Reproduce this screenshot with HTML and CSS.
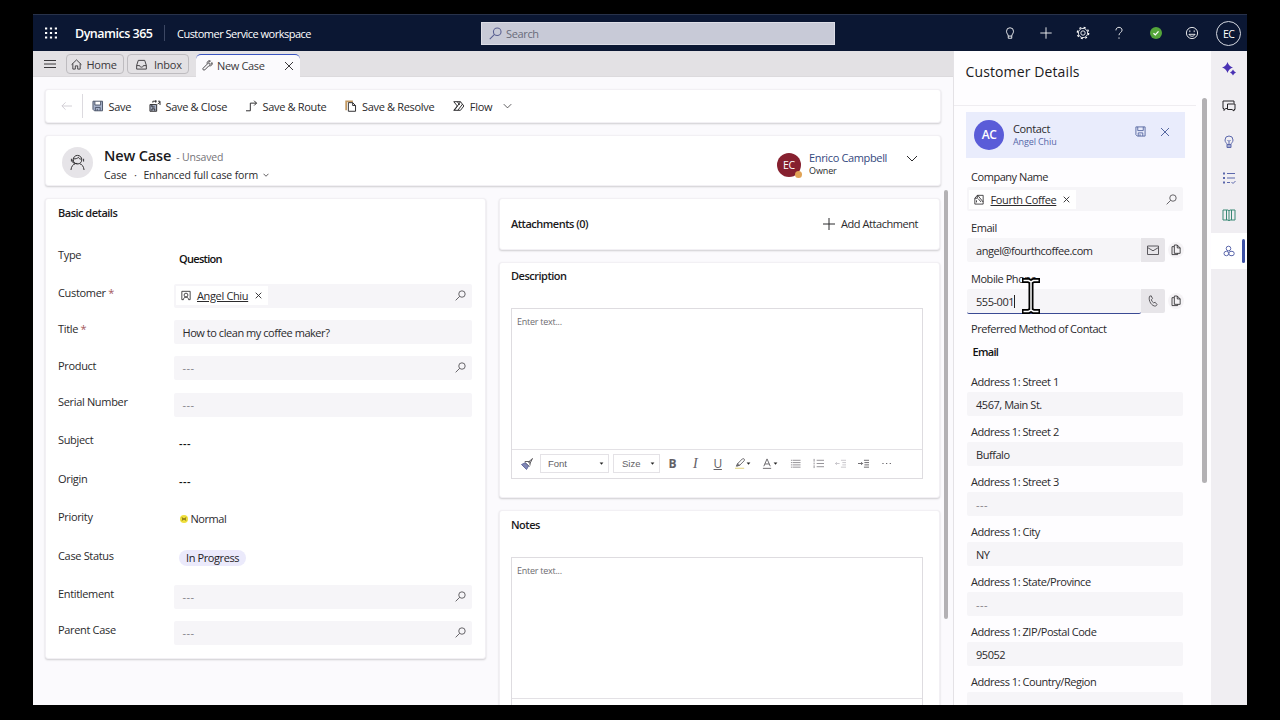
FILE: index.html
```html
<!DOCTYPE html>
<html lang="en">
<head>
    <meta charset="UTF-8">
    <meta name="viewport" content="width=device-width, initial-scale=1.0">
    <title>New Case - Customer Service workspace</title>
    <link rel="stylesheet" href="styles.css">
</head>
<body>
    <!-- Shared icons -->
    <svg class="sprite" width="0" height="0">
        <symbol id="i-search" viewBox="0 0 12 12"><circle cx="7.6" cy="4.4" r="3.5"/><path d="M5.1 6.9L.7 11.3"/></symbol>
        <symbol id="i-close" viewBox="0 0 10 10"><path d="M1 1l8 8M9 1L1 9"/></symbol>
        <symbol id="i-chevron" viewBox="0 0 12 7"><path d="M1 1l5 5 5-5"/></symbol>
        <symbol id="i-copy" viewBox="0 0 12 14"><path d="M4 3V1h3.500L11 4.500V11H4V3M7.500 1v3.500H11M4 3H1.200v9.500H8V11"/></symbol>
        <symbol id="i-save" viewBox="0 0 12 12"><path d="M1 1h10v10H2.500L1 9.500zM3 1v4h6V1M3.500 11V7.500h5V11M5.500 9v2"/></symbol>
        <symbol id="i-caret" viewBox="0 0 6 4"><path class="solid" d="M.5.5h5L3 3.500z"/></symbol>
    </svg>

    <div class="app">
        <header>
            <svg class="waffle" viewBox="0 0 12 12"><path d="M0 1.500h12M0 6h12M0 10.500h12"/></svg>
            <span class="brand">Dynamics 365</span>
            <span class="brand-divider"></span>
            <span class="app-name">Customer Service workspace</span>
            <div class="search-box">
                <svg class="icon"><use href="#i-search"/></svg>
                <span>Search</span>
            </div>
            <div class="header-icons">
                <span><svg viewBox="0 0 16 16"><path d="M6 11.500C6 9.500 4 8.800 4 6a4 4 0 0 1 8 0c0 2.800-2 3.500-2 5.500zM6 11.500V14h4v-2.500"/></svg></span>
                <span><svg viewBox="0 0 16 16"><path d="M8 1.500v13M1.500 8h13"/></svg></span>
                <span><svg viewBox="0 0 16 16"><circle cx="8" cy="8" r="5.300"/><circle cx="8" cy="8" r="2.500"/><circle class="teeth" cx="8" cy="8" r="6.500"/></svg></span>
                <span><svg viewBox="0 0 16 16"><path d="M4.500 5c0-2.200 1.500-3.500 3.500-3.500S11.500 3 11.500 4.700C11.500 7.500 8 7.500 8 10.500M8 13v1.600"/></svg></span>
                <span><svg class="status" viewBox="0 0 12 12"><circle cx="6" cy="6" r="6"/><path d="M3.500 6.200l1.800 1.700 3.200-3.500"/></svg></span>
                <span><svg viewBox="0 0 16 16"><circle cx="8" cy="8" r="6.400"/><path d="M4.500 9.500c1.500 3 5.500 3 7 0zM5.500 5v2M10.500 5v2"/></svg></span>
                <span><b class="me">EC</b></span>
            </div>
        </header>

        <div class="body">
            <div class="workspace">
                <nav class="tabs">
                    <svg class="burger" viewBox="0 0 12 8"><path d="M0 .5h12M0 4h12M0 7.500h12"/></svg>
                    <div class="tab tab-home">
                        <svg class="icon" viewBox="0 0 12 12"><path d="M.6 6.200L6 1l5.400 5.200M2 5v6h2.700V7.500h2.600V11H10V5"/></svg>
                        <span>Home</span>
                    </div>
                    <div class="tab tab-inbox">
                        <svg class="icon" viewBox="0 0 12 12"><path d="M2.500 1.500h7L11.300 7v4H.7V7zM.7 7.200H4c0 2.200 4 2.200 4 0h3.300"/></svg>
                        <span>Inbox</span>
                    </div>
                    <div class="tab tab-active">
                        <svg class="icon" viewBox="0 0 12 12"><path d="M11 2.800L9.200 4.500 7.600 4.300 7.400 2.800 9.200 1C7 .2 5 2 5.700 4.500L1.200 9c-1 1 .7 2.800 1.800 1.800l4.500-4.500C10 7 11.800 5 11 2.800z"/></svg>
                        <span>New Case</span>
                        <svg class="tab-close"><use href="#i-close"/></svg>
                    </div>
                </nav>

                <main>
                    <div class="card commands">
                        <svg class="back" viewBox="0 0 12 10"><path d="M12 5H1M5 1L1 5l4 4"/></svg>
                        <button><svg class="icon floppy"><use href="#i-save"/></svg>Save</button>
                        <button class="cmd-close"><svg class="icon" viewBox="0 0 12 12"><path class="fill-floppy" d="M1 5h7v6H1z"/><path d="M1 4.500h7v7H1zM3 4.500v2.500h3M3 11V9h3v2M4 2.500V1M4 1h4M7 0v2.500M9 4l2.500-2M9.500 1h2v4"/></svg>Save &amp; Close</button>
                        <button class="cmd-route"><svg class="icon" viewBox="0 0 12 12"><path d="M0 11h4.500V3H11M8.500.5L11 3 8.500 5.500"/></svg>Save &amp; Route</button>
                        <button class="cmd-resolve"><svg class="icon" viewBox="0 0 12 12"><path class="tan" d="M1.200 10.500V1.200h7"/><path d="M3.500 2.500h4.500l3 3v6H3.500zM8 2.500v3h3"/></svg>Save &amp; Resolve</button>
                        <button class="cmd-flow"><svg class="icon" viewBox="0 0 12 12"><path d="M.8 1.500h7L11.300 6 7.800 10.500h-7L4.500 6zM4.500 1.500L7 4.800M7.800 1.500L1.500 10.500M10 4L5 10.500"/></svg>Flow</button>
                        <svg class="chevron"><use href="#i-chevron"/></svg>
                    </div>

                    <div class="card record">
                        <div class="record-icon"><svg viewBox="0 0 16 18"><circle cx="8" cy="6" r="4.600"/><path d="M1 17c.4-4 2.500-6.300 4.500-6.500M15 17c-.4-4-2.500-6.300-4.500-6.500M3.500 5C6 5.500 8 4.500 9 3.500c.5 1.500 2 2 3.500 2M3 6v3l2.500 1H8M1.500 5v3M14.500 5v3"/></svg></div>
                        <div class="record-text">
                            <div><h1>New Case</h1><span class="unsaved">- Unsaved</span></div>
                            <div class="record-sub"><span>Case</span><i>·</i><span>Enhanced full case form</span><svg class="chevron-sm"><use href="#i-chevron"/></svg></div>
                        </div>
                        <div class="owner">
                            <div class="owner-avatar">EC</div>
                            <div class="owner-text"><b>Enrico Campbell</b><span>Owner</span></div>
                            <svg class="chevron-lg"><use href="#i-chevron"/></svg>
                        </div>
                    </div>

                    <div class="form">
                        <section class="card basic">
                            <h2>Basic details</h2>
                            <div class="fields">
                                <label class="raised">Type</label>
                                <div class="value strong">Question</div>

                                <label>Customer <em>*</em></label>
                                <div class="field">
                                    <span class="pill">
                                        <svg class="icon" viewBox="0 0 12 12"><path d="M3 11H1V1h10v10H9M2.800 11c.3-2 1.500-3 3.200-3s2.900 1 3.200 3"/><circle cx="6" cy="5.500" r="2.300"/></svg>
                                        <u>Angel Chiu</u>
                                        <svg class="pill-close"><use href="#i-close"/></svg>
                                    </span>
                                    <svg class="lookup"><use href="#i-search"/></svg>
                                </div>

                                <label>Title <em>*</em></label>
                                <div class="field title">How to clean my coffee maker?</div>

                                <label class="lowered">Product</label>
                                <div class="field empty">---<svg class="lookup"><use href="#i-search"/></svg></div>

                                <label>Serial Number</label>
                                <div class="field empty">---</div>

                                <label class="raised">Subject</label>
                                <div class="value strong dashes">---</div>

                                <label>Origin</label>
                                <div class="value strong dashes">---</div>

                                <label class="lowered">Priority</label>
                                <div class="value"><svg class="priority" viewBox="0 0 8 8"><circle cx="4" cy="4" r="4"/><path d="M2.200 2.500l1 1.500-1 1.500M5.800 2.500l-1 1.500 1 1.500M3.200 4h1.600"/></svg>Normal</div>

                                <label class="lowered">Case Status</label>
                                <div class="value"><span class="badge">In Progress</span></div>

                                <label>Entitlement</label>
                                <div class="field empty">---<svg class="lookup"><use href="#i-search"/></svg></div>

                                <label>Parent Case</label>
                                <div class="field empty">---<svg class="lookup"><use href="#i-search"/></svg></div>
                            </div>
                        </section>

                        <div class="form-right">
                            <section class="card attachments">
                                <h2>Attachments (0)</h2>
                                <button><svg class="icon" viewBox="0 0 12 12"><path d="M6 0v12M0 6h12"/></svg>Add Attachment</button>
                            </section>

                            <section class="card description">
                                <h2>Description</h2>
                                <div class="editor">
                                    <div class="editor-text">Enter text...</div>
                                    <div class="toolbar">
                                        <svg class="brush" viewBox="0 0 12 12"><path d="M11.500.5L7.500 4 9 5.500zM3.500 4l5 4.500M4 3.500h5v4"/><path class="brush-head" d="M.5 6.500L4 5l3.500 3-2 3.500z"/></svg>
                                        <span class="select select-font">Font<svg class="caret"><use href="#i-caret"/></svg></span>
                                        <span class="select select-size">Size<svg class="caret"><use href="#i-caret"/></svg></span>
                                        <span class="tool bold">B</span>
                                        <span class="tool italic">I</span>
                                        <span class="tool underline">U</span>
                                        <span class="tool wide"><svg viewBox="0 0 12 12"><path d="M2 8.500L3 6l5-5c1.500-1 3 .5 2 2L5 8zM1.500 9L3 6l2 2z"/><path class="marker" d="M0 11.300h10"/></svg><svg class="caret"><use href="#i-caret"/></svg></span>
                                        <span class="tool wide"><svg viewBox="0 0 12 12"><path d="M2 9l3.500-8L9 9M3.200 6.500h4.600M1 11.300h9"/></svg><svg class="caret"><use href="#i-caret"/></svg></span>
                                        <span class="tool"><svg class="bullets" viewBox="0 0 12 12"><path d="M1 2.500h1.500M1 5h1.500M1 7.500h1.500M1 10h1.500M3 2.500h8.500M3 5h8.500M3 7.500h8.500M3 10h8.500"/></svg></span>
                                        <span class="tool"><svg class="numbers" viewBox="0 0 12 12"><path d="M4 2.500h8M4 6h8M4 9.500h8M1.200 1v3M1.200 5v2M1.200 8v3"/></svg></span>
                                        <span class="tool faded"><svg viewBox="0 0 12 12"><path d="M6.500 2.500H12M8 5h4M8 7.500h4M6.500 10H12M0 6h5M2 4.500L.5 6 2 7.500"/></svg></span>
                                        <span class="tool"><svg viewBox="0 0 12 12"><path d="M6.500 2.500H12M7 5h5M7 7.500h5M6.500 10H12M0 6h5M3.500 4.500L5 6 3.500 7.500"/></svg></span>
                                        <span class="tool"><svg viewBox="0 0 12 12"><path class="dots" d="M1.500 6h9.500"/></svg></span>
                                    </div>
                                </div>
                            </section>

                            <section class="card notes">
                                <h2>Notes</h2>
                                <div class="editor">
                                    <div class="editor-text">Enter text...</div>
                                    <div class="toolbar"></div>
                                </div>
                            </section>
                        </div>
                        <div class="scrollbar"></div>
                    </div>
                </main>
            </div>

            <aside class="details">
                <h3>Customer Details</h3>
                <div class="details-scroll">
                    <div class="details-body">
                        <div class="contact">
                            <div class="contact-avatar">AC</div>
                            <div class="contact-text"><b>Contact</b><span>Angel Chiu</span></div>
                            <svg class="contact-save"><use href="#i-save"/></svg>
                            <svg class="contact-close"><use href="#i-close"/></svg>
                        </div>

                        <div class="group company">
                            <label>Company Name</label>
                            <div class="field">
                                <span class="pill">
                                    <svg class="icon" viewBox="0 0 12 12"><path d="M4 1h7v10.500H1V4.500zM4 1v3.500H1M4.500 1L11 9M5 5l3.500 4M3 7v2.500"/></svg>
                                    <u>Fourth Coffee</u>
                                    <svg class="pill-close"><use href="#i-close"/></svg>
                                </span>
                                <svg class="lookup"><use href="#i-search"/></svg>
                            </div>
                        </div>

                        <div class="group email">
                            <label>Email</label>
                            <div class="field-row">
                                <div class="field">angel@fourthcoffee.com</div>
                                <div class="action"><svg viewBox="0 0 12 12"><path d="M.5 2h11v8.500H.5zM.5 3.500L6 6.800l5.500-3.300"/></svg></div>
                                <div class="copy"><svg><use href="#i-copy"/></svg></div>
                            </div>
                        </div>

                        <div class="group phone">
                            <label>Mobile Phone</label>
                            <div class="field-row">
                                <div class="field focused">555-001<span class="text-caret"></span></div>
                                <div class="action"><svg viewBox="0 0 12 12"><path d="M2.500 1.300L4.200.8l1.300 2.800-1.200 1.200c.4 1.300 1.200 2.300 2.200 3l1.700-.5 1.800 2.300-1.300 1.500C5 11.500 1 6 2.500 1.300z"/></svg></div>
                                <div class="copy"><svg><use href="#i-copy"/></svg></div>
                            </div>
                            <svg class="cursor" viewBox="0 0 20 38"><path class="cursor-edge" d="M1 3.500h6.500L10 5l2.500-1.500H19M10 4v30M1 34.500h6.500L10 33l2.500 1.500H19"/><path class="cursor-core" d="M2.500 3.500h5L10 5l2.500-1.500h5M10 4v30M2.500 34.500h5L10 33l2.500 1.500h5"/></svg>
                        </div>

                        <div class="group preferred">
                            <label>Preferred Method of Contact</label>
                            <div class="value strong">Email</div>
                        </div>

                        <div class="group"><label>Address 1: Street 1</label><div class="field">4567, Main St.</div></div>
                        <div class="group"><label>Address 1: Street 2</label><div class="field">Buffalo</div></div>
                        <div class="group"><label>Address 1: Street 3</label><div class="field empty">---</div></div>
                        <div class="group"><label>Address 1: City</label><div class="field">NY</div></div>
                        <div class="group"><label>Address 1: State/Province</label><div class="field empty">---</div></div>
                        <div class="group"><label>Address 1: ZIP/Postal Code</label><div class="field">95052</div></div>
                        <div class="group"><label>Address 1: Country/Region</label><div class="field"></div></div>
                    </div>
                    <div class="scrollbar"></div>
                </div>
            </aside>

            <nav class="rail">
                <span class="copilot"><svg viewBox="0 0 14 14"><path d="M5.500 0Q6.800 4.200 11 5.500 6.800 6.800 5.500 11 4.200 6.800 0 5.500 4.200 4.200 5.500 0zM11 7.500q.8 2.200 3 3Q11.800 11.300 11 13.500q-.8-2.200-3-3Q10.200 9.700 11 7.500z"/></svg></span>
                <span class="chat"><svg viewBox="0 0 14 14"><path d="M5 9.500H3.500l-1.500 2v-2H1V2h11v2.500M5.500 5H13v5.500h-1V12l-2-1.500H5.500z"/></svg></span>
                <span><svg viewBox="0 0 14 14"><path d="M5 9.500C5 8 3 7.500 3 5a4 4 0 0 1 8 0c0 2.500-2 3-2 4.500zM5 9.500v3h4v-3M5.500 5L7 6.500 8.500 5M7 6.500v3M5 11h4"/></svg></span>
                <span><svg viewBox="0 0 14 14"><path d="M5 2.500h8M5 7h8M5 11.500h3M9.500 11l1.500 1.500L13.500 10"/><path class="bul" d="M1 2.500h2M1 7h2M1 11.500h2"/></svg></span>
                <span class="book"><svg viewBox="0 0 14 14"><path d="M1 2h5l1 .8L8 2h5v10H8l-1 .8-1-.8H1zM7 3v9.500M4.500 2v10M9.500 2v10"/></svg></span>
                <span class="active"><svg viewBox="0 0 14 14"><circle cx="6.500" cy="4.500" r="2.300"/><rect x="2" y="7.300" width="4.700" height="4.400" rx="2.200"/><rect x="6.800" y="7.300" width="5.400" height="4.400" rx="2.200"/></svg></span>
            </nav>
        </div>
    </div>
</body>
</html>
```
FILE: styles.css
```css
* {
    margin: 0;
    padding: 0;
    box-sizing: border-box;
}

body {
    background-color: #000;
    color: #2b2a2c;
    font-family: "Open Sans", "Noto Sans", sans-serif;
    font-size: 11px;
    letter-spacing: -0.45px;
    height: 720px;
    padding: 14px 33px 15px;
    overflow: hidden;
}

svg {
    display: block;
    flex: none;
    fill: none;
    stroke: currentColor;
    stroke-width: 1;
}

.sprite {
    position: absolute;
}

.solid {
    fill: currentColor;
    stroke: none;
}

button {
    display: flex;
    align-items: center;
    background: none;
    border: none;
    color: inherit;
    font: inherit;
    letter-spacing: inherit;
    white-space: nowrap;
}

em {
    color: #a4585c;
    font-style: normal;
}

h1,
h2,
h3 {
    color: #1b1a1c;
    white-space: nowrap;
}

h2 {
    font-size: 11px;
    font-weight: 600;
    line-height: 16px;
    letter-spacing: -0.5px;
}

.icon {
    width: 12px;
    height: 12px;
}

.app {
    height: 691px;
    background-color: #fbfafd;
    overflow: hidden;
}

/* Top bar */
header {
    display: flex;
    align-items: center;
    height: 37px;
    background-color: #0b1733;
    border-top: 1px solid #28324a;
    color: #fff;
    padding-left: 12px;
}

.waffle {
    width: 12px;
    height: 12px;
    stroke-width: 2;
    stroke-dasharray: 2.2 2.700;
}

.brand {
    flex: none;
    width: 89px;
    margin-left: 18px;
    font-size: 12.5px;
    font-weight: 600;
    letter-spacing: -0.5px;
    white-space: nowrap;
}

.brand-divider {
    width: 1px;
    height: 16px;
    background-color: #3c4763;
}

.app-name {
    flex: none;
    width: 293px;
    margin-left: 12px;
    font-size: 11px;
    letter-spacing: -0.52px;
}

.search-box {
    display: flex;
    flex: none;
    align-items: center;
    width: 354px;
    height: 23px;
    margin-left: 11px;
    padding-left: 7px;
    gap: 4px;
    background-color: #c8cad7;
    border: 1px solid #dcdde6;
    color: #696b7a;
    letter-spacing: -0.35px;
}

.search-box .icon {
    width: 13px;
    height: 13px;
    color: #595f91;
}

.header-icons {
    display: flex;
    flex: none;
    margin-left: 156.500px;
}

.header-icons span {
    display: flex;
    align-items: center;
    justify-content: center;
    width: 36.500px;
}

.header-icons svg {
    width: 14px;
    height: 14px;
}

.teeth {
    stroke-width: 1.500;
    stroke-dasharray: 2.300 2.800;
}

.header-icons .status {
    width: 12px;
    height: 12px;
    fill: #54a53a;
    stroke: none;
}

.header-icons .status path {
    fill: none;
    stroke: #fff;
    stroke-width: 1.300;
}

.me {
    width: 25px;
    height: 25px;
    border: 1px solid #d5d8e0;
    border-radius: 50%;
    font-size: 10.500px;
    font-weight: 400;
    line-height: 24px;
    text-align: center;
}

.body {
    display: flex;
    height: 654px;
}

.workspace {
    width: 920px;
    flex: none;
}

/* Session tabs */
.tabs {
    display: flex;
    height: 26px;
    padding: 3px 0 0 11px;
    background-color: #e3e1e4;
    border-bottom: 1px solid #dcdadd;
    color: #3a383b;
    letter-spacing: -0.25px;
}

.burger {
    width: 12px;
    height: 8px;
    margin: 6px 10px 0 0;
}

.tab {
    display: flex;
    align-items: center;
    height: 20px;
    border: 1px solid #bebcc0;
    border-radius: 4px;
}

.tab .icon {
    width: 11px;
    height: 11px;
}

.tab-home {
    width: 58px;
    padding-left: 4px;
    gap: 4.500px;
}

.tab-inbox {
    width: 62px;
    margin-left: 3px;
    padding-left: 8px;
    gap: 7px;
}

.tab-active {
    width: 104px;
    height: 23px;
    margin-left: 7px;
    padding: 0 0 1px 6px;
    gap: 4px;
    background-color: #fbfafd;
    border: none;
    border-top: 1.500px solid #3a54c0;
    border-radius: 5px 5px 0 0;
    letter-spacing: -0.35px;
}

.tab-close {
    width: 10px;
    height: 10px;
    margin-left: auto;
    margin-right: 6px;
}

main {
    padding: 12px 0 0 12px;
}

.card {
    background-color: #fff;
    border: 1px solid #f2f0f4;
    border-radius: 3px;
    box-shadow: 0 1px 2px rgba(0, 0, 0, 0.18);
}

/* Command bar */
.commands {
    display: flex;
    align-items: center;
    width: 896px;
    height: 34px;
    letter-spacing: -0.32px;
}

.back {
    width: 11px;
    height: 10px;
    margin: 0 10px 0 15px;
    color: #cfccd2;
}

.commands button {
    gap: 5px;
}

.commands .icon {
    width: 11.500px;
    height: 12px;
}

.commands .floppy {
    margin-left: 9px;
    fill: #a9b4cc;
    color: #4b5569;
}

.commands button:first-of-type {
    height: 24px;
    border-left: 1px solid #dcdadf;
}

.fill-floppy {
    fill: #a9b4cc;
    stroke: none;
}

.commands .cmd-close {
    margin-left: 18px;
}

.commands .cmd-route,
.commands .cmd-resolve,
.commands .cmd-flow {
    margin-left: 19px;
}

.tan {
    stroke: #c49a62;
    stroke-width: 1.800;
}

.chevron {
    width: 9px;
    height: 6px;
    margin-left: 11px;
}

/* Record header */
.record {
    display: flex;
    width: 896px;
    height: 51px;
    margin-top: 12px;
    padding-left: 16px;
    letter-spacing: -0.12px;
}

.record-icon {
    display: flex;
    align-items: center;
    justify-content: center;
    width: 31px;
    height: 31px;
    margin-top: 11px;
    border-radius: 50%;
    background-color: #e6e4e8;
}

.record-icon svg {
    width: 15px;
    height: 17px;
}

.record-text {
    margin: 10px 0 0 11px;
}

.record-text > div {
    display: flex;
    align-items: baseline;
}

h1 {
    font-size: 14.500px;
    font-weight: 600;
    line-height: 20px;
    letter-spacing: -0.15px;
}

.unsaved {
    margin-left: 5px;
    color: #757378;
    font-size: 10.500px;
    letter-spacing: -0.15px;
}

.record-text .record-sub {
    align-items: center;
    font-size: 10.500px;
    font-weight: 500;
    line-height: 18px;
}

.record-sub i {
    margin: 0 7px;
}

.chevron-sm {
    width: 6px;
    height: 4px;
    margin-left: 5px;
    stroke-width: 1.500;
}

.owner {
    display: flex;
    margin-left: auto;
}

.owner-avatar {
    position: relative;
    width: 24px;
    height: 24px;
    margin: 17px 8px 0 0;
    border-radius: 50%;
    background-color: #86202f;
    color: #fff;
    font-size: 10.500px;
    line-height: 24px;
    text-align: center;
}

.owner-avatar::after {
    content: '';
    position: absolute;
    right: -1px;
    bottom: -1px;
    width: 7px;
    height: 7px;
    border-radius: 50%;
    background-color: #e1a355;
}

.owner-text {
    width: 97px;
    margin-top: 14px;
}

.owner-text b,
.owner-text span {
    display: block;
    font-size: 9px;
    line-height: 12px;
    white-space: nowrap;
}

.owner-text b {
    color: #34497e;
    font-size: 11px;
    font-weight: 500;
    line-height: 15px;
    letter-spacing: -0.35px;
}

.chevron-lg {
    width: 12px;
    height: 7px;
    margin: 19px 22px 0 0;
}

/* Form */
.form {
    display: flex;
    align-items: flex-start;
    margin-top: 12px;
}

.basic {
    width: 441px;
    height: 461px;
    padding: 6px 13px 0 12px;
}

.fields {
    display: grid;
    grid-template-columns: 115.500px 298px;
    grid-template-rows: 37px 36px 36px 37px 39px 38px 37px 39px 39px 36px 24px;
    align-items: start;
    margin-top: 26px;
}

label {
    display: block;
    line-height: 17px;
    letter-spacing: -0.45px;
    white-space: nowrap;
}

.fields label {
    letter-spacing: -0.33px;
}

.raised {
    margin-top: -1px;
}

.lowered {
    margin-top: 1px;
}

.field {
    display: flex;
    align-items: center;
    height: 24px;
    padding: 0 6px 1px 9px;
    border-radius: 2px;
    background-color: #f6f5f8;
    white-space: nowrap;
}

.title {
    padding-bottom: 0;
}

.empty {
    color: #828086;
    letter-spacing: 0.5px;
}

.value {
    display: flex;
    align-items: center;
    height: 24px;
    padding: 0 0 1px 5.500px;
}

.strong {
    color: #111;
    font-weight: 600;
    letter-spacing: -0.7px;
}

.dashes {
    letter-spacing: 0.5px;
}

.lookup {
    width: 11px;
    height: 11px;
    margin-left: auto;
    color: #5a585c;
}

.pill {
    display: flex;
    align-items: center;
    height: 19px;
    margin-left: -7px;
    padding: 0 6px 0 5px;
    gap: 6.500px;
    background-color: #fff;
    letter-spacing: -0.35px;
}

.pill .icon {
    width: 10px;
    height: 11px;
}

.pill-close {
    width: 7px;
    height: 7px;
    stroke-width: 1.300;
}

.priority {
    width: 8px;
    height: 8px;
    margin: 0 3px 0 0.500px;
    fill: #efdf3c;
    stroke: none;
}

.priority path {
    fill: none;
    stroke: #66560a;
}

.badge {
    padding: 0 7px 0 7px;
    border-radius: 8px;
    background-color: #ebeafb;
    color: #1d1c24;
    line-height: 16px;
    letter-spacing: -0.4px;
}

.form-right {
    width: 441px;
    margin-left: 13px;
}

.attachments {
    display: flex;
    align-items: center;
    justify-content: space-between;
    height: 52px;
    padding: 0 21px 1px 11px;
}

.attachments button {
    gap: 6px;
}

.description,
.notes {
    height: 236px;
    margin-top: 12px;
    padding: 5px 16px 0 11px;
}

.notes {
    padding-top: 6px;
}

.editor {
    height: 171px;
    margin-top: 24px;
    border: 1px solid #dedce0;
}

.editor-text {
    height: 140px;
    padding: 5px;
    color: #6d6b70;
    font-size: 9px;
    line-height: 15px;
    letter-spacing: -0.25px;
}

.toolbar {
    display: flex;
    align-items: center;
    height: 29px;
    padding-bottom: 1px;
    border-top: 1px solid #e3e1e5;
    color: #626065;
}

.brush {
    width: 12px;
    height: 12px;
    margin: 0 7px 0 9px;
}

.brush-head {
    fill: #8188b5;
    stroke: #656da2;
}

.select {
    display: flex;
    align-items: center;
    justify-content: space-between;
    height: 19px;
    padding: 0 4px 0 8px;
    border: 1px solid #e4e2e6;
    font-family: "Liberation Sans", sans-serif;
    font-size: 9.500px;
    letter-spacing: 0;
}

.select-font {
    width: 69px;
    padding-left: 7px;
}

.select-size {
    width: 47px;
    margin: 0 1px 0 4px;
}

.caret {
    width: 5px;
    height: 3px;
    color: #222;
}

.tool {
    display: flex;
    align-items: center;
    justify-content: center;
    width: 22.700px;
    font-size: 12px;
}

.tool svg:first-child {
    width: 11px;
    height: 11px;
}

.bold {
    font-weight: 700;
}

.italic {
    font-family: "Liberation Serif", serif;
    font-size: 14px;
    font-style: italic;
}

.underline {
    text-decoration: underline;
}

.wide {
    width: 27.500px;
}

.marker {
    stroke: #e8dc9a;
    stroke-width: 1.500;
}

.bullets,
.numbers {
    color: #8c8a8f;
}

.faded {
    color: #c5c3c8;
}

.dots {
    stroke-width: 1.300;
    stroke-dasharray: 1.300 2.700;
}

.scrollbar {
    flex: none;
    border-radius: 3px;
    background-color: #b3b1b4;
}

.form > .scrollbar {
    width: 4px;
    height: 429px;
    margin: -8px 0 0 4px;
}

/* Customer details pane */
.details {
    width: 258px;
    flex: none;
    background-color: #fefdff;
    border-left: 1px solid #e4e2e6;
}

h3 {
    height: 47px;
    padding: 10px 0 0 11.500px;
    font-size: 14px;
    font-weight: 400;
    line-height: 22px;
    letter-spacing: 0.12px;
}

.details-scroll {
    display: flex;
    align-items: flex-start;
}

.details-body {
    width: 242px;
    padding: 6px 0 0 12px;
    margin-top: 7px;
    border-top: 1px solid #efedf1;
}

.details-scroll .scrollbar {
    width: 5px;
    height: 385px;
    margin-left: 6px;
}

.contact {
    display: flex;
    width: 219px;
    height: 46px;
    padding: 8px 0 0 8px;
    background-color: #e9ecfc;
}

.contact-avatar {
    width: 30px;
    height: 30px;
    border-radius: 50%;
    background-color: #5a5cd8;
    color: #fff;
    font-size: 12px;
    font-weight: 600;
    line-height: 30px;
    text-align: center;
}

.contact-text {
    width: 122px;
    margin: 1px 0 0 9px;
}

.contact-text b,
.contact-text span {
    display: block;
    font-weight: 400;
    line-height: 15px;
    letter-spacing: -0.35px;
}

.contact-text span {
    color: #5567a8;
    font-size: 9px;
    line-height: 12px;
    letter-spacing: -0.12px;
}

.contact-save {
    width: 11px;
    height: 11px;
    margin-top: 6px;
    color: #5567a0;
}

.contact-close {
    width: 10px;
    height: 10px;
    margin: 7px 0 0 14px;
    color: #5567a0;
}

.group {
    position: relative;
    width: 216px;
    height: 50px;
    margin-left: 1px;
}

.group label {
    height: 19px;
    padding: 0 0 0 4px;
}

.group .field {
    padding-bottom: 0;
}

.company {
    height: 51px;
    margin-top: 10px;
}

.email {
    height: 51px;
}

.phone {
    height: 50px;
}

.preferred {
    height: 53px;
}

.preferred .value {
    height: 25px;
}

.field-row {
    display: flex;
}

.field-row .field {
    flex: none;
    width: 174px;
}

.action {
    display: flex;
    flex: none;
    align-items: center;
    justify-content: center;
    width: 24px;
    height: 24px;
    border-radius: 0 2px 2px 0;
    background-color: #e7e5e9;
    color: #5b595e;
}

.action svg {
    width: 12px;
    height: 12px;
}

.copy {
    display: flex;
    flex: none;
    align-items: center;
    justify-content: center;
    width: 16px;
    height: 16px;
    margin: 4px 0 0 3px;
    border-radius: 50%;
    background-color: #f5f3f6;
}

.copy svg {
    width: 10px;
    height: 12px;
}

.focused {
    height: 25px;
    border-bottom: 1.500px solid #3a4a94;
}

.text-caret {
    width: 1px;
    height: 13px;
    background-color: #222;
}

/* Mouse pointer over the phone field */
.cursor {
    position: absolute;
    left: 54px;
    top: 7px;
    width: 20px;
    height: 38px;
}

.cursor-edge {
    stroke: #000;
    stroke-width: 5;
}

.cursor-core {
    stroke: #fff;
    stroke-width: 1.500;
}

/* Right icon rail */
.rail {
    width: 36px;
    background-color: #f0eef2;
    color: #5c68ac;
}

.rail span {
    display: flex;
    align-items: center;
    justify-content: center;
    height: 36.400px;
}

.rail svg {
    width: 14px;
    height: 14px;
}

.copilot svg {
    fill: #4a32b4;
    stroke: none;
}

.rail .chat {
    color: #242326;
}

.bul {
    stroke-width: 2;
}

.rail .book {
    color: #398875;
}

.rail .active {
    position: relative;
    background-color: #fff;
}

.rail .active::after {
    content: '';
    position: absolute;
    right: 2px;
    top: 6px;
    width: 3px;
    height: 24px;
    border-radius: 2px;
    background-color: #3c50a4;
}
```
